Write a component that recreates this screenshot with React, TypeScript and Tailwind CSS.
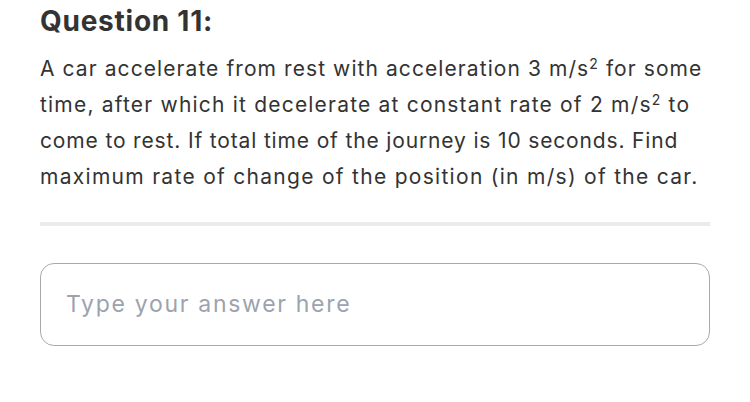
import React from "react";

const FONT = "Inter, 'Noto Sans', sans-serif";

export default function App() {
  const sup = "text-[14px]";
  const lines: { t: React.ReactNode; c: string }[] = [
    { t: <>A car accelerate from rest with acceleration 3 m/s<sup className={sup}>2</sup> for some</>, c: "tracking-[1.08px]" },
    { t: <>time, after which it decelerate at constant rate of 2 m/s<sup className={sup}>2</sup> to</>, c: "tracking-[1.2px]" },
    { t: <>come to rest. If total time of the journey is 10 seconds. Find</>, c: "tracking-[0.85px]" },
    { t: <>maximum rate of change of the position (in m/s) of the car.</>, c: "tracking-[1.29px]" },
  ];
  return (
    <div className="w-[750px] h-[402px] bg-white px-[40px] pt-[4px]" style={{ fontFamily: FONT }}>
      <h1 className="text-[28px] font-bold text-[#333333] leading-[34px] tracking-[0.75px]">Question 11:</h1>
      <div className="mt-[13px] text-[21px] text-[#333333] leading-[36px]">
        {lines.map((l, i) => (
          <div key={i} className={"whitespace-nowrap " + l.c}>{l.t}</div>
        ))}
      </div>
      <div className="mt-[27px] h-[4px] w-[670px] bg-[#ebebeb]" />
      <div className="mt-[37px] w-[670px] h-[83px] rounded-[14px] border-[1.5px] border-[#aaaaaa] flex items-center pl-[25px]">
        <input
          className="w-full outline-none text-[23px] tracking-[1.7px] text-[#333] placeholder:text-[#9ca3af] bg-transparent"
          placeholder="Type your answer here"
          style={{ fontFamily: FONT }}
        />
      </div>
    </div>
  );
}
